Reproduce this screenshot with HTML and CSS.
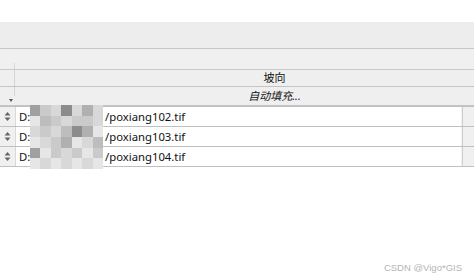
FILE: index.html
```html
<!DOCTYPE html>
<html>
<head>
<meta charset="utf-8">
<link rel="stylesheet" href="styles.css">
</head>
<body>
<div class="page">
  <div class="blank"></div>
  <div class="toolbar"></div>
  <div class="band"><div class="band-gutter"></div></div>
  <div class="table">
    <div class="row head">
      <div class="gutter"></div>
      <div class="cell">坡向</div>
    </div>
    <div class="row fill">
      <div class="gutter"><span class="caret"></span></div>
      <div class="cell italic">自动填充...</div>
    </div>
    <div class="row data">
      <div class="spin"><svg width="7" height="11" viewBox="0 0 7 11"><path d="M0.5 4.5 L3.5 1 L6.5 4.5 Z" fill="#666"/><path d="M0.5 6.5 L3.5 10 L6.5 6.5 Z" fill="#666"/></svg></div>
      <div class="input"><span class="drive">D:</span><span class="gap"></span>/poxiang102.tif</div>
      <div class="btn"></div>
    </div>
    <div class="row data">
      <div class="spin"><svg width="7" height="11" viewBox="0 0 7 11"><path d="M0.5 4.5 L3.5 1 L6.5 4.5 Z" fill="#666"/><path d="M0.5 6.5 L3.5 10 L6.5 6.5 Z" fill="#666"/></svg></div>
      <div class="input"><span class="drive">D:</span><span class="gap"></span>/poxiang103.tif</div>
      <div class="btn"></div>
    </div>
    <div class="row data">
      <div class="spin"><svg width="7" height="11" viewBox="0 0 7 11"><path d="M0.5 4.5 L3.5 1 L6.5 4.5 Z" fill="#666"/><path d="M0.5 6.5 L3.5 10 L6.5 6.5 Z" fill="#666"/></svg></div>
      <div class="input"><span class="drive">D:</span><span class="gap"></span>/poxiang104.tif</div>
      <div class="btn"></div>
    </div>
    <div class="mosaic">
      <i class="g9"></i><i class="gc"></i><i class="gd"></i><i class="g8"></i><i class="gd"></i><i class="ga"></i><i class="gd"></i>
      <i class="ge"></i><i class="gb"></i><i class="gc"></i><i class="gd"></i><i class="gc"></i><i class="gc"></i><i class="gd"></i>
      <i class="gd"></i><i class="gc"></i><i class="gd"></i><i class="gb"></i><i class="g8"></i><i class="ga"></i><i class="ge"></i>
      <i class="ge"></i><i class="gd"></i><i class="gc"></i><i class="ga"></i><i class="ge"></i><i class="gd"></i><i class="gb"></i>
      <i class="g9"></i><i class="ge"></i><i class="gc"></i><i class="gd"></i><i class="gc"></i><i class="ge"></i><i class="gc"></i>
      <i class="ge"></i><i class="gd"></i><i class="ge"></i><i class="gd"></i><i class="ge"></i><i class="gd"></i><i class="ge"></i>
    </div>
  </div>
  <div class="footer"><span class="mark">CSDN @Vigo*GIS</span></div>
</div>
</body>
</html>
```

FILE: styles.css
```css
html, body {
  margin: 0;
  padding: 0;
  background: #ffffff;
}
.page {
  width: 474px;
  height: 279px;
  display: flex;
  flex-direction: column;
  font-family: "Noto Sans", "Noto Sans CJK SC", sans-serif;
  font-size: 11px;
  color: #111;
  overflow: hidden;
}
.blank {
  height: 22px;
}
.toolbar {
  height: 26px;
  background: #ededed;
  border-bottom: 1px solid #c6c6c6;
}
.band {
  height: 20px;
  background: #f0f0f0;
  border-bottom: 1px solid #cacaca;
  display: flex;
  align-items: flex-end;
}
.band-gutter {
  width: 14px;
  height: 6px;
  border-right: 1px solid #d8d8d8;
}
.table {
  position: relative;
  display: flex;
  flex-direction: column;
}
.row {
  display: flex;
}
.head, .fill {
  height: 16px;
  background: #efefef;
  border-bottom: 1px solid #c4c4c4;
}
.fill {
  height: 18px;
}
.gutter {
  width: 14px;
  border-right: 1px solid #d4d4d4;
  position: relative;
}
.fill .gutter {
  border-right: none;
  width: 15px;
  background: linear-gradient(#d4d4d4, #d4d4d4) no-repeat 14px 0 / 1px 9px;
}
.caret {
  position: absolute;
  left: 9px;
  top: 12px;
  width: 0;
  height: 0;
  border-left: 2px solid transparent;
  border-right: 2px solid transparent;
  border-top: 3px solid #555;
}
.cell {
  flex: 1;
  display: flex;
  align-items: center;
  justify-content: center;
  padding-left: 60px;
  line-height: 16px;
}
.italic {
  font-style: italic;
}
.data {
  height: 19px;
  border-bottom: 1px solid #c0c0c0;
  background: #f0f0f0;
}
.table .head + .fill + .data {
  border-top: 1px solid #c0c0c0;
}
.spin {
  width: 15px;
  display: flex;
  align-items: center;
  justify-content: center;
  padding-right: 1px;
  box-sizing: border-box;
}
.input {
  width: 446px;
  background: #ffffff;
  border-left: 1px solid #d8d8d8;
  display: flex;
  align-items: center;
  padding-left: 3px;
  box-sizing: border-box;
  white-space: nowrap;
  font-size: 11.3px;
}
.drive {
  width: 12px;
}
.gap {
  width: 74px;
}
.btn {
  flex: 1;
  border-left: 1px solid #cfcfcf;
  margin-left: 1px;
  background: #f0f0f0;
}
.mosaic {
  position: absolute;
  left: 30px;
  top: 35px;
  width: 73px;
  height: 64px;
  display: grid;
  grid-template-columns: repeat(7, 1fr);
  grid-template-rows: repeat(6, 1fr);
}
.mosaic i { display: block; }
.g8 { background: #8c8c8c; }
.g9 { background: #a0a0a0; }
.ga { background: #b0b0b0; }
.gb { background: #bdbdbd; }
.gc { background: #cacaca; }
.gd { background: #d8d8d8; }
.ge { background: #e6e6e6; }
.footer {
  flex: 1;
  display: flex;
  align-items: flex-end;
  justify-content: flex-end;
  padding: 0 12px 6px 0;
}
.mark {
  font-family: "Liberation Sans", sans-serif;
  font-size: 9.5px;
  color: #b4b4b4;
}
```
